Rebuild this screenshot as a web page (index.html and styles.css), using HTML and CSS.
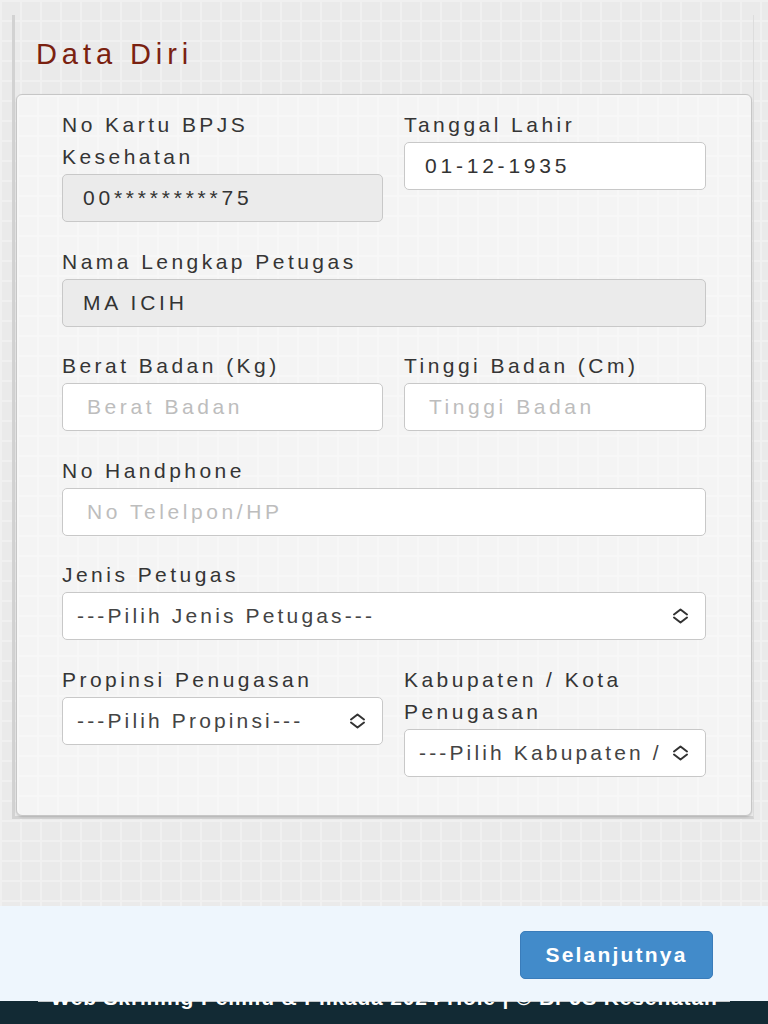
FILE: index.html
```html
<!DOCTYPE html>
<html lang="id">
<head>
    <meta charset="UTF-8">
    <meta name="viewport" content="width=device-width, initial-scale=1.0">
    <title>Data Diri - Skrining</title>
    <link rel="stylesheet" href="styles.css">
</head>
<body>
    <div class="page">
        <main class="content">
            <section class="frame">
                <h2 class="title">Data Diri</h2>
                <div class="panel">
                    <form class="form-grid">
                        <div class="field">
                            <label for="kartu">No Kartu BPJS<br>Kesehatan</label>
                            <input class="input" id="kartu" type="text" value="00*********75" readonly>
                        </div>
                        <div class="field">
                            <label for="lahir">Tanggal Lahir</label>
                            <input class="input" id="lahir" type="text" value="01-12-1935">
                        </div>

                        <div class="field full">
                            <label for="nama">Nama Lengkap Petugas</label>
                            <input class="input" id="nama" type="text" value="MA ICIH" readonly>
                        </div>

                        <div class="field">
                            <label for="berat">Berat Badan (Kg)</label>
                            <input class="input" id="berat" type="text" placeholder="Berat Badan">
                        </div>
                        <div class="field">
                            <label for="tinggi">Tinggi Badan (Cm)</label>
                            <input class="input" id="tinggi" type="text" placeholder="Tinggi Badan">
                        </div>

                        <div class="field full">
                            <label for="hp">No Handphone</label>
                            <input class="input" id="hp" type="text" placeholder="No Telelpon/HP">
                        </div>

                        <div class="field full">
                            <label>Jenis Petugas</label>
                            <div class="select">
                                <span class="select-text">---Pilih Jenis Petugas---</span>
                                <svg class="chevron" width="17" height="16" viewBox="0 0 17 16"><path d="M2 6.5 L8.5 1.5 L15 6.5 M2 9.5 L8.5 14.5 L15 9.5" fill="none" stroke="#333" stroke-width="2" stroke-linecap="round" stroke-linejoin="round"/></svg>
                            </div>
                        </div>

                        <div class="field">
                            <label>Propinsi Penugasan</label>
                            <div class="select">
                                <span class="select-text">---Pilih Propinsi---</span>
                                <svg class="chevron" width="17" height="16" viewBox="0 0 17 16"><path d="M2 6.5 L8.5 1.5 L15 6.5 M2 9.5 L8.5 14.5 L15 9.5" fill="none" stroke="#333" stroke-width="2" stroke-linecap="round" stroke-linejoin="round"/></svg>
                            </div>
                        </div>
                        <div class="field">
                            <label>Kabupaten / Kota Penugasan</label>
                            <div class="select">
                                <span class="select-text">---Pilih Kabupaten /</span>
                                <svg class="chevron" width="17" height="16" viewBox="0 0 17 16"><path d="M2 6.5 L8.5 1.5 L15 6.5 M2 9.5 L8.5 14.5 L15 9.5" fill="none" stroke="#333" stroke-width="2" stroke-linecap="round" stroke-linejoin="round"/></svg>
                            </div>
                        </div>
                    </form>
                </div>
            </section>
        </main>

        <div class="action-bar">
            <button class="btn-next" type="button">Selanjutnya</button>
        </div>

        <footer class="footer">
            <div class="footer-rule"></div>
            <p class="footer-text">Web Skrining Pemilu &amp; Pilkada 2024 Hoie | &copy; BPJS Kesehatan</p>
        </footer>
    </div>
</body>
</html>
```

FILE: styles.css
```css
body {
    margin: 0;
    font-family: 'Liberation Sans', Arial, sans-serif;
    letter-spacing: 0.15em;
    color: #333;
}

.page {
    height: 100vh;
    display: flex;
    flex-direction: column;
    overflow: hidden;
    background-color: #eaeaea;
    background-image:
        linear-gradient(#f0f0f0 2px, transparent 2px),
        linear-gradient(90deg, #f0f0f0 2px, transparent 2px);
    background-size: 20px 20px;
}

.content {
    flex: 1;
    padding: 15px 14px 0 12px;
}

.frame {
    padding-top: 19px;
    border-left: 3px solid #d2d2d2;
    border-bottom: 3px solid #d2d2d2;
    border-right: 1px solid #dddddd;
}

.title {
    margin: 0 0 20px 21px;
    font-size: 29px;
    line-height: 40px;
    font-weight: normal;
    letter-spacing: 0.17em;
    color: #7a2110;
}

.panel {
    margin: 0 1px;
    padding: 14px 45px 38px;
    border: 1px solid #c6c6c6;
    border-radius: 6px;
    background-color: #f4f4f4;
    background-image:
        linear-gradient(#f7f7f7 2px, transparent 2px),
        linear-gradient(90deg, #f7f7f7 2px, transparent 2px);
    background-size: 20px 20px;
    box-shadow: 0 1px 2px rgba(0, 0, 0, 0.15);
}

.form-grid {
    display: grid;
    grid-template-columns: 321px 302px;
    column-gap: 21px;
    row-gap: 23.6px;
    align-items: start;
}

.field.full {
    grid-column: 1 / -1;
}

.field label {
    display: block;
    font-size: 21px;
    line-height: 32px;
    margin-bottom: 1px;
    letter-spacing: 0.165em;
    color: #353535;
}

.input {
    box-sizing: border-box;
    display: block;
    width: 100%;
    height: 48px;
    margin: 0;
    padding: 0 20px;
    border: 1px solid #c8c8c8;
    border-radius: 5px;
    background: #fff;
    font-family: inherit;
    font-size: 21px;
    letter-spacing: 0.18em;
    color: #333;
    outline: none;
}

.input[readonly] {
    background: #ebebeb;
}

.input:placeholder-shown {
    padding-left: 24px;
    letter-spacing: 0.17em;
}

.input::placeholder {
    color: #bdbdbd;
}

.select {
    box-sizing: border-box;
    display: flex;
    align-items: center;
    gap: 8px;
    height: 48px;
    padding: 0 16px 0 14px;
    border: 1px solid #c8c8c8;
    border-radius: 5px;
    background: #fff;
    font-size: 21px;
    letter-spacing: 0.15em;
    color: #444;
}

.select-text {
    flex: 1;
    min-width: 0;
    overflow: hidden;
    white-space: nowrap;
}

.chevron {
    flex-shrink: 0;
}

.action-bar {
    box-sizing: border-box;
    height: 95px;
    padding: 25px 55px 0;
    display: flex;
    justify-content: flex-end;
    align-items: flex-start;
    background: #eef6fd;
}

.btn-next {
    width: 193px;
    height: 48px;
    border: 1px solid #3a7cba;
    border-radius: 5px;
    background: #428bca;
    color: #fff;
    font-family: inherit;
    font-size: 21px;
    font-weight: bold;
    letter-spacing: 0.105em;
    cursor: pointer;
}

.footer {
    height: 23px;
    overflow: hidden;
    background: #122a34;
}

.footer-rule {
    height: 1px;
    margin: 0 38px;
    background: #c2c6c8;
}

.footer-text {
    margin: -15px 0 0;
    text-align: center;
    white-space: nowrap;
    font-size: 21px;
    line-height: 22px;
    font-weight: bold;
    letter-spacing: 0.04em;
    color: #fff;
}
```
